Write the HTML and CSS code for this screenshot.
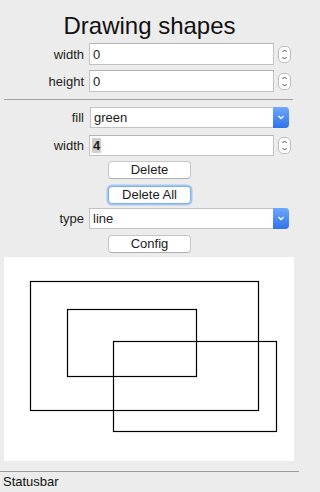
FILE: index.html
```html
<!DOCTYPE html>
<html>
<head>
<meta charset="utf-8">
<link rel="stylesheet" href="styles.css">
</head>
<body>
<div class="app">
  <div class="title">Drawing shapes</div>
  <div class="row r1">
    <span class="label">width</span>
    <div class="input">0</div>
    <div class="spin"><svg width="13" height="17" viewBox="0 0 13 17"><polyline points="4.5,6 6.5,4 8.5,6" /><polyline points="4.5,11 6.5,13 8.5,11" /></svg></div>
  </div>
  <div class="row r2">
    <span class="label">height</span>
    <div class="input">0</div>
    <div class="spin"><svg width="13" height="17" viewBox="0 0 13 17"><polyline points="4.5,6 6.5,4 8.5,6" /><polyline points="4.5,11 6.5,13 8.5,11" /></svg></div>
  </div>
  <div class="sep"></div>
  <div class="row r3">
    <span class="label">fill</span>
    <div class="select fillsel"><span class="val">green</span><span class="arrow"><svg width="16" height="21" viewBox="0 0 16 21"><polyline points="5.5,9 8,11.5 10.5,9" /></svg></span></div>
  </div>
  <div class="row r4">
    <span class="label">width</span>
    <div class="input"><span class="sel">4</span></div>
    <div class="spin"><svg width="13" height="17" viewBox="0 0 13 17"><polyline points="4.5,6 6.5,4 8.5,6" /><polyline points="4.5,11 6.5,13 8.5,11" /></svg></div>
  </div>
  <div class="btnrow b1"><button class="btn">Delete</button></div>
  <div class="btnrow b2"><button class="btn focus">Delete All</button></div>
  <div class="row r5">
    <span class="label">type</span>
    <div class="select"><span class="val">line</span><span class="arrow"><svg width="16" height="21" viewBox="0 0 16 21"><polyline points="5.5,9 8,11.5 10.5,9" /></svg></span></div>
  </div>
  <div class="btnrow b3"><button class="btn">Config</button></div>
  <div class="canvas">
    <svg width="290" height="204" viewBox="0 0 290 204">
      <rect x="26.5" y="24.5" width="228" height="129" />
      <rect x="63.5" y="52.5" width="129" height="67" />
      <rect x="109.5" y="84.5" width="163" height="90" />
    </svg>
  </div>
  <div class="status">Statusbar</div>
</div>
</body>
</html>
```
FILE: styles.css
```css
html, body {
  margin: 0;
  padding: 0;
  background: #ececec;
}
body {
  font-family: "Liberation Sans", Arial, sans-serif;
  font-size: 13px;
  color: #1c1c1c;
  width: 299px;
  height: 492px;
  overflow: hidden;
}
.app {
  display: flex;
  flex-direction: column;
  height: 492px;
}
.title {
  margin-top: 12px;
  height: 28px;
  line-height: 28px;
  font-size: 24px;
  text-align: center;
  color: #111;
}
.row {
  display: flex;
  align-items: center;
  height: 22px;
}
.r1 { margin-top: 3px; }
.r2 { margin-top: 5px; }
.r3 { margin-top: 7px; height: 21px; }
.r4 { margin-top: 7px; height: 21px; }
.r5 { margin-top: 4px; height: 21px; }
.label {
  width: 84px;
  text-align: right;
  margin-right: 5px;
}
.input {
  width: 185px;
  height: 100%;
  box-sizing: border-box;
  background: #fff;
  border: 1px solid #c3c3c3;
  border-top-color: #b4b4b4;
  padding-left: 3px;
  display: flex;
  align-items: center;
}
.sel {
  background: #cfcfcf;
  font-weight: bold;
  padding: 0 1px;
  margin-left: -1px;
}
.spin {
  margin-left: 4px;
  width: 13px;
  height: 17px;
  box-sizing: border-box;
  background: #fff;
  border: 1px solid #bdbdbd;
  border-radius: 5px;
  display: flex;
}
.spin svg {
  margin: -1px;
}
.spin polyline {
  fill: none;
  stroke: #444;
  stroke-width: 1;
}
.sep {
  margin: 7px 6px 0 4px;
  height: 1px;
  background: #a3a3a3;
}
.select {
  width: 200px;
  height: 100%;
  box-sizing: border-box;
  background: #fff;
  border: 1px solid #c3c3c3;
  border-right: none;
  border-radius: 0 4px 4px 0;
  display: flex;
  align-items: center;
  justify-content: space-between;
  padding-left: 3px;
}
.fillsel {
  width: 199px;
  margin-left: 1px;
}
.arrow {
  width: 16px;
  height: 21px;
  margin-top: -1px;
  margin-bottom: -1px;
  background: linear-gradient(#6da8fa, #2f72ec);
  border-radius: 0 4px 4px 0;
  display: flex;
}
.arrow polyline {
  fill: none;
  stroke: #fff;
  stroke-width: 1.3;
}
.btnrow {
  display: flex;
  justify-content: center;
}
.b1 { margin-top: 5px; }
.b2 { margin-top: 7px; }
.b3 { margin-top: 6px; }
.btn {
  width: 83px;
  height: 18px;
  padding: 0;
  font-family: "Liberation Sans", Arial, sans-serif;
  font-size: 13px;
  color: #1c1c1c;
  background: #fff;
  border: 1px solid #c6c6c6;
  border-bottom-color: #b0b0b0;
  border-radius: 4px;
  line-height: 16px;
}
.btn.focus {
  border-color: #7eaee8;
  box-shadow: 0 0 0 1.5px #a7c8ef;
}
.canvas {
  margin: 4px 5px 0 4px;
  height: 204px;
  background: #fff;
}
.canvas svg {
  display: block;
}
.canvas rect {
  fill: none;
  stroke: #000;
  stroke-width: 1.2;
}
.status {
  margin-top: 10px;
  border-top: 1px solid #9b9b9b;
  flex: 1;
  padding-left: 3px;
  line-height: 20px;
  font-size: 13px;
  color: #111;
}
```
